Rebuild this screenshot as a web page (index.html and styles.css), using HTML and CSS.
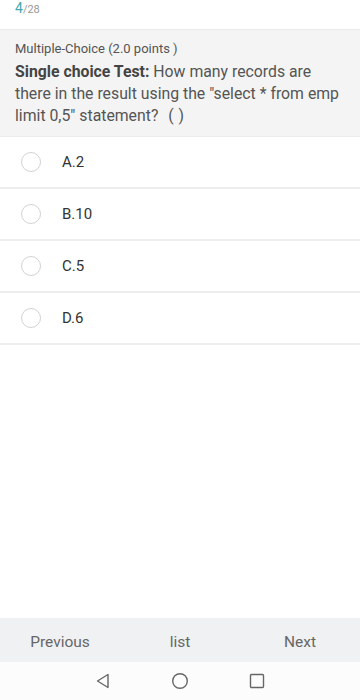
FILE: index.html
```html
<!DOCTYPE html>
<html lang="en">
<head>
  <meta charset="UTF-8" />
  <meta name="viewport" content="width=device-width, initial-scale=1.0">
  <title>Test</title>
  <link rel="stylesheet" href="styles.css">
</head>
<body>
  <div class="page">
    <div class="counter"><span class="current">4</span><span class="total">/28</span></div>

    <div class="question">
      <div class="qtype">Multiple-Choice (2.0 points )</div>
      <div class="qtext"><strong>Single choice Test:</strong> How many records are there in the result using the "select * from emp limit 0,5" statement? <span class="blank">( )</span></div>
    </div>

    <ul class="options">
      <li class="option"><span class="radio"></span>A.2</li>
      <li class="option"><span class="radio"></span>B.10</li>
      <li class="option"><span class="radio"></span>C.5</li>
      <li class="option"><span class="radio"></span>D.6</li>
    </ul>

    <div class="spacer"></div>

    <div class="actions">
      <div class="action">Previous</div>
      <div class="action">list</div>
      <div class="action">Next</div>
    </div>

    <div class="navbar">
      <svg width="18" height="18" viewBox="0 0 18 18"><path d="M14 2.5 L3.5 9 L14 15.5 Z" fill="none" stroke="#666" stroke-width="1.4" stroke-linejoin="round"/></svg>
      <svg width="18" height="18" viewBox="0 0 18 18"><circle cx="9" cy="9" r="7.3" fill="none" stroke="#666" stroke-width="1.4"/></svg>
      <svg width="18" height="18" viewBox="0 0 18 18"><rect x="2.5" y="2.5" width="13" height="13" rx="1" fill="none" stroke="#666" stroke-width="1.4"/></svg>
    </div>
  </div>
</body>
</html>
```

FILE: styles.css
```css
* { box-sizing: border-box; }
body {
  margin: 0;
  font-family: Roboto, "Liberation Sans", Arial, sans-serif;
  background: #fff;
  color: #444;
}
.page {
  height: 700px;
  display: flex;
  flex-direction: column;
}
.counter {
  height: 30px;
  padding: 0 15px;
  line-height: 16px;
  border-bottom: 1px solid #ebebeb;
}
.current {
  font-size: 14px;
  color: #45a9b3;
}
.total {
  font-size: 11px;
  color: #999;
}
.question {
  background: #f4f4f4;
  padding: 9px 15px 9px;
  border-bottom: 1px solid #ececec;
}
.qtype {
  font-size: 13px;
  color: #555;
  line-height: 20px;
  margin-bottom: 2px;
}
.qtext {
  font-size: 15.8px;
  line-height: 22px;
  color: #555;
}
.qtext strong {
  color: #444;
}
.blank {
  margin-left: 6px;
  word-spacing: 1px;
}
.options {
  list-style: none;
  margin: 0;
  padding: 0;
}
.option {
  height: 52px;
  display: flex;
  align-items: center;
  padding-left: 21px;
  padding-bottom: 1px;
  font-size: 15px;
  color: #333;
  border-bottom: 2px solid #eeeeee;
}
.radio {
  width: 20px;
  height: 20px;
  border: 1.5px solid #d2d2d2;
  border-radius: 50%;
  margin-right: 21px;
}
.spacer {
  flex: 1;
}
.actions {
  height: 44px;
  background: #f0f1f3;
  display: flex;
  align-items: center;
  padding-top: 3px;
  font-size: 15.5px;
  color: #666;
}
.action {
  flex: 1;
  text-align: center;
}
.navbar {
  height: 38px;
  background: #fcfcfc;
  display: flex;
  align-items: center;
  justify-content: center;
  gap: 59px;
}
```
